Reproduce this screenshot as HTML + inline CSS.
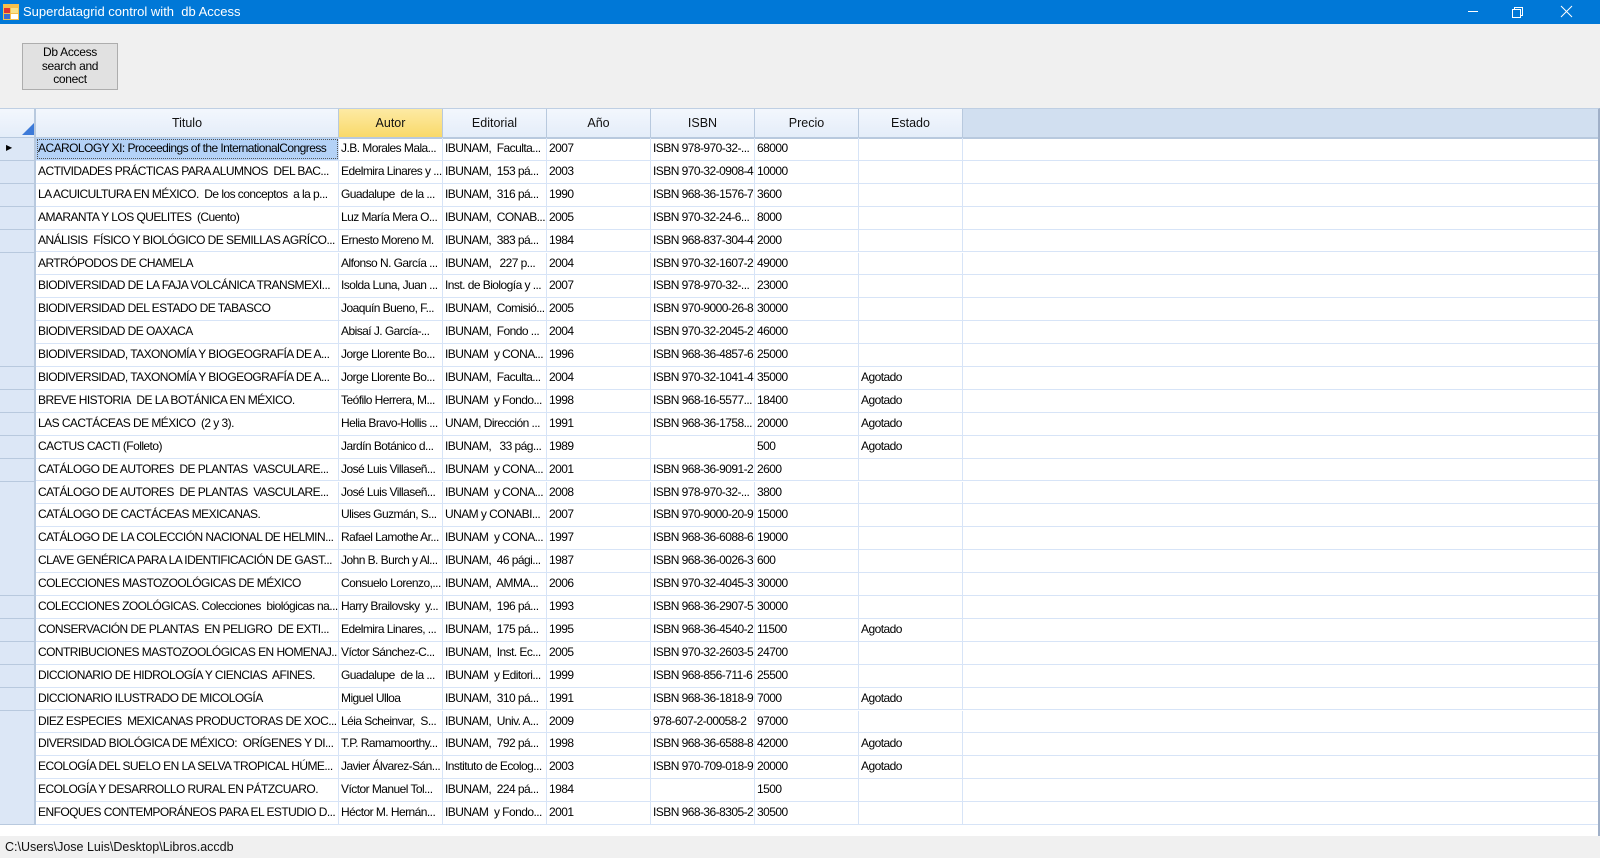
<!DOCTYPE html>
<html><head><meta charset="utf-8"><style>
*{box-sizing:border-box;margin:0;padding:0}
body{width:1600px;height:858px;background:#f0f0f0;font-family:"Liberation Sans",Arial,sans-serif;overflow:hidden;position:relative}
.tb{position:absolute;left:0;top:0;width:1600px;height:24px;background:#0078d7;color:#fff;font-size:13px}
.tb .t{position:absolute;left:23px;top:4px}
.btn{position:absolute;left:22px;top:43px;width:96px;height:47px;background:#e1e1e1;border:1px solid #adadad;font-size:12px;text-align:center;line-height:13.5px;padding-top:2px;letter-spacing:-0.3px}
.grid{position:absolute;left:0;top:108px;width:1600px;height:728px;background:#fff;border-top:1px solid #bfcfe3;border-right:2px solid #a0b0c8}
.hdr{position:absolute;left:0;top:0;width:1598px;height:30px;background:#d1dff0;border-bottom:2px solid #b8c9de}
.hc{position:absolute;top:0;height:28px;background:linear-gradient(#f3f7fd,#e4edf9);border-right:1px solid #b8c9de;font-size:12.5px;text-align:center;line-height:28px;color:#111}
.row{position:absolute;left:0;width:1598px;height:22.9px;border-bottom:1.5px solid #d7e4f7}
.c{position:absolute;top:0;height:100%;border-right:1.5px solid #d7e4f7;font-size:12px;letter-spacing:-0.55px;line-height:21px;padding-left:2px;white-space:nowrap;overflow:hidden;color:#000}
.rh{position:absolute;left:0;top:0;width:36px;height:calc(100% + 1.5px);background:#dce7f6;border-right:2px solid #b8c9de;border-bottom:1.5px solid #b8c9de}
.status{position:absolute;left:5px;top:840px;font-size:12.5px;color:#111}
</style></head><body>
<div class="tb">
<svg style="position:absolute;left:3px;top:4px" width="16" height="16"><rect x="0" y="0" width="16" height="16" fill="#f4c04c"/><rect x="1" y="4" width="6" height="5" fill="#d33"/><rect x="8" y="4" width="7" height="5" fill="#f7e28a"/><rect x="1" y="10" width="6" height="5" fill="#3a6fd3"/><rect x="8" y="10" width="7" height="5" fill="#fff"/></svg>
<span class="t">Superdatagrid control with&nbsp; db Access</span>
<svg style="position:absolute;left:1468px;top:4px" width="120" height="16" stroke="#fff" fill="none" stroke-width="1"><line x1="0" y1="7.5" x2="10" y2="7.5"/><rect x="44.5" y="5.5" width="8" height="8"/><path d="M46.5 5.5V3.5h8v8h-2"/><path d="M93 2l11 11M104 2L93 13"/></svg>
</div>
<div class="btn">Db Access<br>search and<br>conect</div>
<div class="grid">
<div class="hdr">
<div class="hc" style="left:0;width:36px;border-right:2px solid #b8c9de"><svg style="position:absolute;left:22px;top:14px" width="12" height="12"><path d="M12 0V12H0Z" fill="#3d7ad8"/></svg></div>
<div class="hc" style="left:36px;width:303px">Titulo</div>
<div class="hc" style="left:339px;width:104px;background:linear-gradient(#fdeaa4,#f9d969)">Autor</div>
<div class="hc" style="left:443px;width:104px">Editorial</div>
<div class="hc" style="left:547px;width:104px">Año</div>
<div class="hc" style="left:651px;width:104px">ISBN</div>
<div class="hc" style="left:755px;width:104px">Precio</div>
<div class="hc" style="left:859px;width:104px">Estado</div>
</div>
</div>
<div class="status">C:\Users\Jose Luis\Desktop\Libros.accdb</div>
<div style="position:absolute;left:0;top:138px;width:1598px">
<div class="row" style="top:0px"><div class="rh"><span style="position:absolute;left:6px;top:5px;font-size:8px">&#9654;</span></div><div class="c" style="left:36px;width:303px;background:#b4d2f7;outline:1px dotted #555;outline-offset:-2px">ACAROLOGY XI: Proceedings of the InternationalCongress</div><div class="c" style="left:339px;width:104px">J.B. Morales Mala...</div><div class="c" style="left:443px;width:104px">IBUNAM,&nbsp; Faculta...</div><div class="c" style="left:547px;width:104px">2007</div><div class="c" style="left:651px;width:104px">ISBN 978-970-32-...</div><div class="c" style="left:755px;width:104px">68000</div><div class="c" style="left:859px;width:104px"></div></div>
<div class="row" style="top:22.9px"><div class="rh"></div><div class="c" style="left:36px;width:303px">ACTIVIDADES PRÁCTICAS PARA ALUMNOS&nbsp; DEL BAC...</div><div class="c" style="left:339px;width:104px">Edelmira Linares y ...</div><div class="c" style="left:443px;width:104px">IBUNAM,&nbsp; 153 pá...</div><div class="c" style="left:547px;width:104px">2003</div><div class="c" style="left:651px;width:104px">ISBN 970-32-0908-4</div><div class="c" style="left:755px;width:104px">10000</div><div class="c" style="left:859px;width:104px"></div></div>
<div class="row" style="top:45.8px"><div class="rh"></div><div class="c" style="left:36px;width:303px">LA ACUICULTURA EN MÉXICO.&nbsp; De los conceptos&nbsp; a la p...</div><div class="c" style="left:339px;width:104px">Guadalupe&nbsp; de la ...</div><div class="c" style="left:443px;width:104px">IBUNAM,&nbsp; 316 pá...</div><div class="c" style="left:547px;width:104px">1990</div><div class="c" style="left:651px;width:104px">ISBN 968-36-1576-7</div><div class="c" style="left:755px;width:104px">3600</div><div class="c" style="left:859px;width:104px"></div></div>
<div class="row" style="top:68.7px"><div class="rh"></div><div class="c" style="left:36px;width:303px">AMARANTA Y LOS QUELITES&nbsp; (Cuento)</div><div class="c" style="left:339px;width:104px">Luz María Mera O...</div><div class="c" style="left:443px;width:104px">IBUNAM,&nbsp; CONAB...</div><div class="c" style="left:547px;width:104px">2005</div><div class="c" style="left:651px;width:104px">ISBN 970-32-24-6...</div><div class="c" style="left:755px;width:104px">8000</div><div class="c" style="left:859px;width:104px"></div></div>
<div class="row" style="top:91.6px"><div class="rh"></div><div class="c" style="left:36px;width:303px">ANÁLISIS&nbsp; FÍSICO Y BIOLÓGICO DE SEMILLAS AGRÍCO...</div><div class="c" style="left:339px;width:104px">Ernesto Moreno M.</div><div class="c" style="left:443px;width:104px">IBUNAM,&nbsp; 383 pá...</div><div class="c" style="left:547px;width:104px">1984</div><div class="c" style="left:651px;width:104px">ISBN 968-837-304-4</div><div class="c" style="left:755px;width:104px">2000</div><div class="c" style="left:859px;width:104px"></div></div>
<div class="row" style="top:114.5px"><div class="rh"></div><div class="c" style="left:36px;width:303px">ARTRÓPODOS DE CHAMELA</div><div class="c" style="left:339px;width:104px">Alfonso N. García ...</div><div class="c" style="left:443px;width:104px">IBUNAM,&nbsp;&nbsp; 227 p...</div><div class="c" style="left:547px;width:104px">2004</div><div class="c" style="left:651px;width:104px">ISBN 970-32-1607-2</div><div class="c" style="left:755px;width:104px">49000</div><div class="c" style="left:859px;width:104px"></div></div>
<div class="row" style="top:137.4px"><div class="rh"></div><div class="c" style="left:36px;width:303px">BIODIVERSIDAD DE LA FAJA VOLCÁNICA TRANSMEXI...</div><div class="c" style="left:339px;width:104px">Isolda Luna, Juan ...</div><div class="c" style="left:443px;width:104px">Inst. de Biología y ...</div><div class="c" style="left:547px;width:104px">2007</div><div class="c" style="left:651px;width:104px">ISBN 978-970-32-...</div><div class="c" style="left:755px;width:104px">23000</div><div class="c" style="left:859px;width:104px"></div></div>
<div class="row" style="top:160.3px"><div class="rh"></div><div class="c" style="left:36px;width:303px">BIODIVERSIDAD DEL ESTADO DE TABASCO</div><div class="c" style="left:339px;width:104px">Joaquín Bueno, F...</div><div class="c" style="left:443px;width:104px">IBUNAM,&nbsp; Comisió...</div><div class="c" style="left:547px;width:104px">2005</div><div class="c" style="left:651px;width:104px">ISBN 970-9000-26-8</div><div class="c" style="left:755px;width:104px">30000</div><div class="c" style="left:859px;width:104px"></div></div>
<div class="row" style="top:183.2px"><div class="rh"></div><div class="c" style="left:36px;width:303px">BIODIVERSIDAD DE OAXACA</div><div class="c" style="left:339px;width:104px">Abisaí J. García-...</div><div class="c" style="left:443px;width:104px">IBUNAM,&nbsp; Fondo ...</div><div class="c" style="left:547px;width:104px">2004</div><div class="c" style="left:651px;width:104px">ISBN 970-32-2045-2</div><div class="c" style="left:755px;width:104px">46000</div><div class="c" style="left:859px;width:104px"></div></div>
<div class="row" style="top:206.1px"><div class="rh"></div><div class="c" style="left:36px;width:303px">BIODIVERSIDAD, TAXONOMÍA Y BIOGEOGRAFÍA DE A...</div><div class="c" style="left:339px;width:104px">Jorge Llorente Bo...</div><div class="c" style="left:443px;width:104px">IBUNAM&nbsp; y CONA...</div><div class="c" style="left:547px;width:104px">1996</div><div class="c" style="left:651px;width:104px">ISBN 968-36-4857-6</div><div class="c" style="left:755px;width:104px">25000</div><div class="c" style="left:859px;width:104px"></div></div>
<div class="row" style="top:229px"><div class="rh"></div><div class="c" style="left:36px;width:303px">BIODIVERSIDAD, TAXONOMÍA Y BIOGEOGRAFÍA DE A...</div><div class="c" style="left:339px;width:104px">Jorge Llorente Bo...</div><div class="c" style="left:443px;width:104px">IBUNAM,&nbsp; Faculta...</div><div class="c" style="left:547px;width:104px">2004</div><div class="c" style="left:651px;width:104px">ISBN 970-32-1041-4</div><div class="c" style="left:755px;width:104px">35000</div><div class="c" style="left:859px;width:104px">Agotado</div></div>
<div class="row" style="top:251.9px"><div class="rh"></div><div class="c" style="left:36px;width:303px">BREVE HISTORIA&nbsp; DE LA BOTÁNICA EN MÉXICO.</div><div class="c" style="left:339px;width:104px">Teófilo Herrera, M...</div><div class="c" style="left:443px;width:104px">IBUNAM&nbsp; y Fondo...</div><div class="c" style="left:547px;width:104px">1998</div><div class="c" style="left:651px;width:104px">ISBN 968-16-5577...</div><div class="c" style="left:755px;width:104px">18400</div><div class="c" style="left:859px;width:104px">Agotado</div></div>
<div class="row" style="top:274.8px"><div class="rh"></div><div class="c" style="left:36px;width:303px">LAS CACTÁCEAS DE MÉXICO&nbsp; (2 y 3).</div><div class="c" style="left:339px;width:104px">Helia Bravo-Hollis ...</div><div class="c" style="left:443px;width:104px">UNAM, Dirección ...</div><div class="c" style="left:547px;width:104px">1991</div><div class="c" style="left:651px;width:104px">ISBN 968-36-1758...</div><div class="c" style="left:755px;width:104px">20000</div><div class="c" style="left:859px;width:104px">Agotado</div></div>
<div class="row" style="top:297.7px"><div class="rh"></div><div class="c" style="left:36px;width:303px">CACTUS CACTI (Folleto)</div><div class="c" style="left:339px;width:104px">Jardín Botánico d...</div><div class="c" style="left:443px;width:104px">IBUNAM,&nbsp;&nbsp; 33 pág...</div><div class="c" style="left:547px;width:104px">1989</div><div class="c" style="left:651px;width:104px"></div><div class="c" style="left:755px;width:104px">500</div><div class="c" style="left:859px;width:104px">Agotado</div></div>
<div class="row" style="top:320.6px"><div class="rh"></div><div class="c" style="left:36px;width:303px">CATÁLOGO DE AUTORES&nbsp; DE PLANTAS&nbsp; VASCULARE...</div><div class="c" style="left:339px;width:104px">José Luis Villaseñ...</div><div class="c" style="left:443px;width:104px">IBUNAM&nbsp; y CONA...</div><div class="c" style="left:547px;width:104px">2001</div><div class="c" style="left:651px;width:104px">ISBN 968-36-9091-2</div><div class="c" style="left:755px;width:104px">2600</div><div class="c" style="left:859px;width:104px"></div></div>
<div class="row" style="top:343.5px"><div class="rh"></div><div class="c" style="left:36px;width:303px">CATÁLOGO DE AUTORES&nbsp; DE PLANTAS&nbsp; VASCULARE...</div><div class="c" style="left:339px;width:104px">José Luis Villaseñ...</div><div class="c" style="left:443px;width:104px">IBUNAM&nbsp; y CONA...</div><div class="c" style="left:547px;width:104px">2008</div><div class="c" style="left:651px;width:104px">ISBN 978-970-32-...</div><div class="c" style="left:755px;width:104px">3800</div><div class="c" style="left:859px;width:104px"></div></div>
<div class="row" style="top:366.4px"><div class="rh"></div><div class="c" style="left:36px;width:303px">CATÁLOGO DE CACTÁCEAS MEXICANAS.</div><div class="c" style="left:339px;width:104px">Ulises Guzmán, S...</div><div class="c" style="left:443px;width:104px">UNAM y CONABI...</div><div class="c" style="left:547px;width:104px">2007</div><div class="c" style="left:651px;width:104px">ISBN 970-9000-20-9</div><div class="c" style="left:755px;width:104px">15000</div><div class="c" style="left:859px;width:104px"></div></div>
<div class="row" style="top:389.3px"><div class="rh"></div><div class="c" style="left:36px;width:303px">CATÁLOGO DE LA COLECCIÓN NACIONAL DE HELMIN...</div><div class="c" style="left:339px;width:104px">Rafael Lamothe Ar...</div><div class="c" style="left:443px;width:104px">IBUNAM&nbsp; y CONA...</div><div class="c" style="left:547px;width:104px">1997</div><div class="c" style="left:651px;width:104px">ISBN 968-36-6088-6</div><div class="c" style="left:755px;width:104px">19000</div><div class="c" style="left:859px;width:104px"></div></div>
<div class="row" style="top:412.2px"><div class="rh"></div><div class="c" style="left:36px;width:303px">CLAVE GENÉRICA PARA LA IDENTIFICACIÓN DE GAST...</div><div class="c" style="left:339px;width:104px">John B. Burch y Al...</div><div class="c" style="left:443px;width:104px">IBUNAM,&nbsp; 46 pági...</div><div class="c" style="left:547px;width:104px">1987</div><div class="c" style="left:651px;width:104px">ISBN 968-36-0026-3</div><div class="c" style="left:755px;width:104px">600</div><div class="c" style="left:859px;width:104px"></div></div>
<div class="row" style="top:435.1px"><div class="rh"></div><div class="c" style="left:36px;width:303px">COLECCIONES MASTOZOOLÓGICAS DE MÉXICO</div><div class="c" style="left:339px;width:104px">Consuelo Lorenzo,...</div><div class="c" style="left:443px;width:104px">IBUNAM,&nbsp; AMMA...</div><div class="c" style="left:547px;width:104px">2006</div><div class="c" style="left:651px;width:104px">ISBN 970-32-4045-3</div><div class="c" style="left:755px;width:104px">30000</div><div class="c" style="left:859px;width:104px"></div></div>
<div class="row" style="top:458px"><div class="rh"></div><div class="c" style="left:36px;width:303px">COLECCIONES ZOOLÓGICAS. Colecciones&nbsp; biológicas na...</div><div class="c" style="left:339px;width:104px">Harry Brailovsky&nbsp; y...</div><div class="c" style="left:443px;width:104px">IBUNAM,&nbsp; 196 pá...</div><div class="c" style="left:547px;width:104px">1993</div><div class="c" style="left:651px;width:104px">ISBN 968-36-2907-5</div><div class="c" style="left:755px;width:104px">30000</div><div class="c" style="left:859px;width:104px"></div></div>
<div class="row" style="top:480.9px"><div class="rh"></div><div class="c" style="left:36px;width:303px">CONSERVACIÓN DE PLANTAS&nbsp; EN PELIGRO&nbsp; DE EXTI...</div><div class="c" style="left:339px;width:104px">Edelmira Linares, ...</div><div class="c" style="left:443px;width:104px">IBUNAM,&nbsp; 175 pá...</div><div class="c" style="left:547px;width:104px">1995</div><div class="c" style="left:651px;width:104px">ISBN 968-36-4540-2</div><div class="c" style="left:755px;width:104px">11500</div><div class="c" style="left:859px;width:104px">Agotado</div></div>
<div class="row" style="top:503.8px"><div class="rh"></div><div class="c" style="left:36px;width:303px">CONTRIBUCIONES MASTOZOOLÓGICAS EN HOMENAJ...</div><div class="c" style="left:339px;width:104px">Víctor Sánchez-C...</div><div class="c" style="left:443px;width:104px">IBUNAM,&nbsp; Inst. Ec...</div><div class="c" style="left:547px;width:104px">2005</div><div class="c" style="left:651px;width:104px">ISBN 970-32-2603-5</div><div class="c" style="left:755px;width:104px">24700</div><div class="c" style="left:859px;width:104px"></div></div>
<div class="row" style="top:526.7px"><div class="rh"></div><div class="c" style="left:36px;width:303px">DICCIONARIO DE HIDROLOGÍA Y CIENCIAS&nbsp; AFINES.</div><div class="c" style="left:339px;width:104px">Guadalupe&nbsp; de la ...</div><div class="c" style="left:443px;width:104px">IBUNAM&nbsp; y Editori...</div><div class="c" style="left:547px;width:104px">1999</div><div class="c" style="left:651px;width:104px">ISBN 968-856-711-6</div><div class="c" style="left:755px;width:104px">25500</div><div class="c" style="left:859px;width:104px"></div></div>
<div class="row" style="top:549.6px"><div class="rh"></div><div class="c" style="left:36px;width:303px">DICCIONARIO ILUSTRADO DE MICOLOGÍA</div><div class="c" style="left:339px;width:104px">Miguel Ulloa</div><div class="c" style="left:443px;width:104px">IBUNAM,&nbsp; 310 pá...</div><div class="c" style="left:547px;width:104px">1991</div><div class="c" style="left:651px;width:104px">ISBN 968-36-1818-9</div><div class="c" style="left:755px;width:104px">7000</div><div class="c" style="left:859px;width:104px">Agotado</div></div>
<div class="row" style="top:572.5px"><div class="rh"></div><div class="c" style="left:36px;width:303px">DIEZ ESPECIES&nbsp; MEXICANAS PRODUCTORAS DE XOC...</div><div class="c" style="left:339px;width:104px">Léia Scheinvar,&nbsp; S...</div><div class="c" style="left:443px;width:104px">IBUNAM,&nbsp; Univ. A...</div><div class="c" style="left:547px;width:104px">2009</div><div class="c" style="left:651px;width:104px">978-607-2-00058-2</div><div class="c" style="left:755px;width:104px">97000</div><div class="c" style="left:859px;width:104px"></div></div>
<div class="row" style="top:595.4px"><div class="rh"></div><div class="c" style="left:36px;width:303px">DIVERSIDAD BIOLÓGICA DE MÉXICO:&nbsp; ORÍGENES Y DI...</div><div class="c" style="left:339px;width:104px">T.P. Ramamoorthy...</div><div class="c" style="left:443px;width:104px">IBUNAM,&nbsp; 792 pá...</div><div class="c" style="left:547px;width:104px">1998</div><div class="c" style="left:651px;width:104px">ISBN 968-36-6588-8</div><div class="c" style="left:755px;width:104px">42000</div><div class="c" style="left:859px;width:104px">Agotado</div></div>
<div class="row" style="top:618.3px"><div class="rh"></div><div class="c" style="left:36px;width:303px">ECOLOGÍA DEL SUELO EN LA SELVA TROPICAL HÚME...</div><div class="c" style="left:339px;width:104px">Javier Álvarez-Sán...</div><div class="c" style="left:443px;width:104px">Instituto de Ecolog...</div><div class="c" style="left:547px;width:104px">2003</div><div class="c" style="left:651px;width:104px">ISBN 970-709-018-9</div><div class="c" style="left:755px;width:104px">20000</div><div class="c" style="left:859px;width:104px">Agotado</div></div>
<div class="row" style="top:641.2px"><div class="rh"></div><div class="c" style="left:36px;width:303px">ECOLOGÍA Y DESARROLLO RURAL EN PÁTZCUARO.</div><div class="c" style="left:339px;width:104px">Víctor Manuel Tol...</div><div class="c" style="left:443px;width:104px">IBUNAM,&nbsp; 224 pá...</div><div class="c" style="left:547px;width:104px">1984</div><div class="c" style="left:651px;width:104px"></div><div class="c" style="left:755px;width:104px">1500</div><div class="c" style="left:859px;width:104px"></div></div>
<div class="row" style="top:664.1px"><div class="rh"></div><div class="c" style="left:36px;width:303px">ENFOQUES CONTEMPORÁNEOS PARA EL ESTUDIO D...</div><div class="c" style="left:339px;width:104px">Héctor M. Hernán...</div><div class="c" style="left:443px;width:104px">IBUNAM&nbsp; y Fondo...</div><div class="c" style="left:547px;width:104px">2001</div><div class="c" style="left:651px;width:104px">ISBN 968-36-8305-2</div><div class="c" style="left:755px;width:104px">30500</div><div class="c" style="left:859px;width:104px"></div></div>
</div>
</body></html>
